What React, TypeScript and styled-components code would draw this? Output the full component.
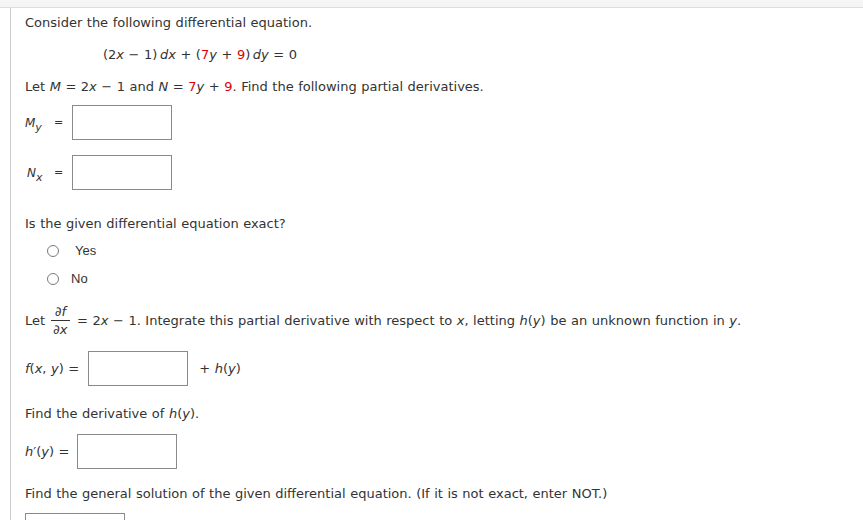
import React from 'react';
import styled, { createGlobalStyle } from 'styled-components';

const GlobalStyle = createGlobalStyle`
  html, body {
    margin: 0;
    padding: 0;
    background: #ffffff;
  }
  body {
    font-family: Verdana, "DejaVu Sans", sans-serif;
    font-size: 13px;
    color: #333333;
    word-spacing: 0.4px;
  }
`;

const Page = styled.div`
  width: 863px;
  height: 520px;
  overflow: hidden;
`;

const TopBand = styled.div`
  height: 7px;
  background: #f5f5f5;
  border-bottom: 1px solid #dddddd;
`;

const Question = styled.div`
  margin-left: 10px;
  border-left: 1px solid #cccccc;
  padding: 7px 0 0 14px;
  display: flex;
  flex-direction: column;
  align-items: flex-start;
  min-height: 520px;
`;

const Line = styled.div<{ $top?: number; $indent?: number }>`
  margin-top: ${({ $top }) => $top ?? 0}px;
  padding-left: ${({ $indent }) => $indent ?? 0}px;
  line-height: 16px;
  white-space: nowrap;
`;

const V = styled.i`
  font-style: italic;
`;

const Red = styled.span`
  color: #e00000;
`;

const AnswerRow = styled.div<{ $top: number }>`
  margin-top: ${({ $top }) => $top}px;
  display: flex;
  align-items: center;
`;

const PartialLabel = styled.span<{ $shift?: number }>`
  width: 29px;
  padding-left: ${({ $shift }) => $shift ?? 0}px;
  box-sizing: border-box;
  font-size: 12px;
  font-style: italic;
  line-height: 14px;

  sub {
    font-size: 11px;
    vertical-align: -4px;
    line-height: 0;
  }
`;

const Equals = styled.span`
  font-size: 11px;
  margin-right: 9px;
`;

const FuncLabel = styled.span<{ $gap: number }>`
  font-size: 13px;
  margin-right: ${({ $gap }) => $gap}px;
`;

const AnswerBox = styled.div`
  width: 98px;
  height: 33px;
  border: 1px solid #8a8a8a;
  background: #ffffff;
  flex: none;
`;

const After = styled.span`
  font-size: 13px;
  margin-left: 11px;
`;

const ChoiceRow = styled.label<{ $top: number; $textGap: number }>`
  margin-top: ${({ $top }) => $top}px;
  margin-left: 22px;
  display: flex;
  align-items: center;
  gap: ${({ $textGap }) => $textGap}px;
  font-family: Arial, "Liberation Sans", sans-serif;
  font-size: 13px;
  line-height: 16px;
  color: #333333;
`;

const Radio = styled.span`
  width: 10px;
  height: 10px;
  border: 1px solid #7a7a7a;
  border-radius: 50%;
  background: #ffffff;
  flex: none;
`;

const FracLine = styled.div<{ $top: number }>`
  margin-top: ${({ $top }) => $top}px;
  display: flex;
  align-items: center;
  white-space: nowrap;
  line-height: 16px;
`;

const Fraction = styled.span`
  display: inline-flex;
  flex-direction: column;
  align-items: center;
  margin: 0 1px 0 4px;
  font-style: italic;
  line-height: 15px;
`;

const Numer = styled.span`
  padding: 0 4px 1px;
  border-bottom: 1px solid #333333;
`;

const Denom = styled.span`
  padding: 1px 4px 0;
`;

export default function App() {
  return (
    <Page>
      <GlobalStyle />
      <TopBand />
      <Question>
        <Line>Consider the following differential equation.</Line>
        <Line $top={16} $indent={78}>
          (2<V>x</V> − 1)&thinsp;<V>dx</V> + (<Red>7</Red><V>y</V> + <Red>9</Red>)&thinsp;<V>dy</V> = 0
        </Line>
        <Line $top={16}>
          Let <V>M</V> = 2<V>x</V> − 1 and <V>N</V> = <Red>7</Red><V>y</V> + <Red>9</Red>. Find the following partial derivatives.
        </Line>

        <AnswerRow $top={10}>
          <PartialLabel>
            M<sub>y</sub>
          </PartialLabel>
          <Equals>=</Equals>
          <AnswerBox />
        </AnswerRow>
        <AnswerRow $top={15}>
          <PartialLabel $shift={2}>
            N<sub>x</sub>
          </PartialLabel>
          <Equals>=</Equals>
          <AnswerBox />
        </AnswerRow>

        <Line $top={26}>Is the given differential equation exact?</Line>
        <ChoiceRow $top={11} $textGap={16}>
          <Radio />
          Yes
        </ChoiceRow>
        <ChoiceRow $top={12} $textGap={12}>
          <Radio />
          No
        </ChoiceRow>

        <FracLine $top={17}>
          Let
          <Fraction>
            <Numer>∂f</Numer>
            <Denom>∂x</Denom>
          </Fraction>
          &nbsp;= 2<V>x</V>&nbsp;− 1. Integrate this partial derivative with respect to&nbsp;<V>x</V>, letting&nbsp;<V>h</V>(<V>y</V>)&nbsp;be an unknown function in&nbsp;<V>y</V>.
        </FracLine>

        <AnswerRow $top={14}>
          <FuncLabel $gap={9}>
            <V>f</V>(<V>x</V>, <V>y</V>) =
          </FuncLabel>
          <AnswerBox />
          <After>
            + <V>h</V>(<V>y</V>)
          </After>
        </AnswerRow>

        <Line $top={20}>
          Find the derivative of <V>h</V>(<V>y</V>).
        </Line>

        <AnswerRow $top={12}>
          <FuncLabel $gap={8}>
            <V>h</V>′(<V>y</V>) =
          </FuncLabel>
          <AnswerBox />
        </AnswerRow>

        <Line $top={17}>
          Find the general solution of the given differential equation. (If it is not exact, enter NOT.)
        </Line>
        <AnswerRow $top={11}>
          <AnswerBox />
        </AnswerRow>
      </Question>
    </Page>
  );
}
